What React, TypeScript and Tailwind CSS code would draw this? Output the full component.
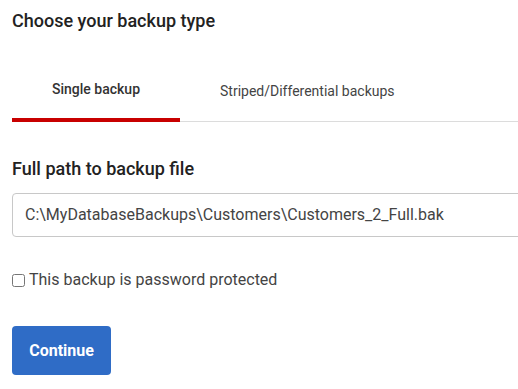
export default function App() {
  return (
    <div className="h-[389px] w-[518px] overflow-hidden bg-white font-['Roboto',sans-serif] text-[#222]">
      <div className="w-[600px] px-3 pt-[9px]">
        <h2 className="text-[18px] font-medium leading-6">Choose your backup type</h2>

        {/* tabs */}
        <div className="mt-[42px] flex border-b border-[#dcdcdc]">
          <button className="-mb-px border-b-[4px] border-[#c80000] px-10 pb-[19px] pt-[4px] text-[14px] font-medium leading-5 text-[#333]">
            Single backup
          </button>
          <button className="px-10 pb-[19px] pt-[4px] text-[14px] leading-5 text-[#444]">
            Striped/Differential backups
          </button>
        </div>

        <h3 className="mt-[35px] text-[18px] font-medium leading-6">Full path to backup file</h3>
        <div className="mt-[12px] flex h-[44px] items-center rounded-[4px] border border-[#c8c8c8] px-3 text-[16px] text-[#444]">
          C:\MyDatabaseBackups\Customers\Customers_2_Full.bak
        </div>

        <label className="mt-[31px] flex items-center gap-[4px] text-[16px] leading-6 text-[#444]">
          <input type="checkbox" className="h-[13px] w-[13px]" />
          This backup is password protected
        </label>

        <button className="mt-[34px] h-[49px] w-[99px] rounded-[4px] bg-[#2f6cc6] text-[16px] font-bold text-white">
          Continue
        </button>
      </div>
    </div>
  );
}
